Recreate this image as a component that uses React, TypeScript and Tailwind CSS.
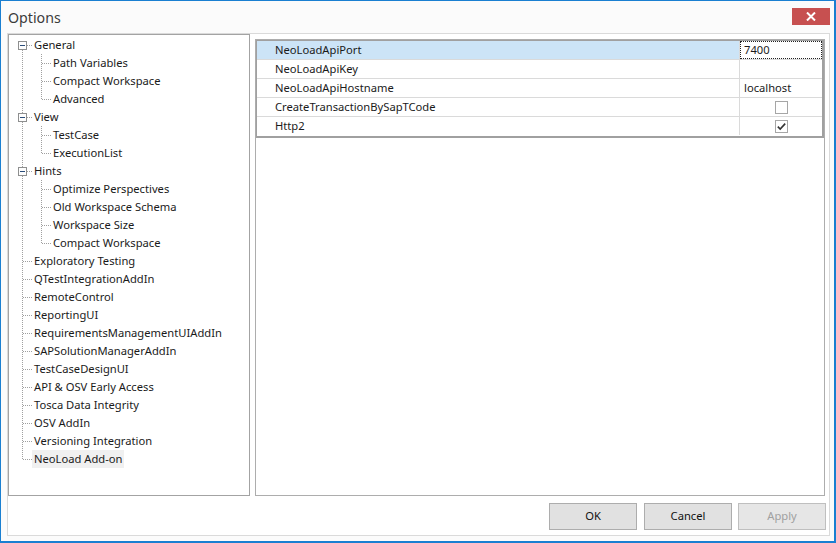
import React from "react";

type Row = {
  label: string;
  level: 0 | 1;
  parent?: boolean;
  first?: boolean;
  last?: boolean;
  lastChild?: boolean;
  selected?: boolean;
};

const tree: { label: string; children?: string[] }[] = [
  { label: "General", children: ["Path Variables", "Compact Workspace", "Advanced"] },
  { label: "View", children: ["TestCase", "ExecutionList"] },
  { label: "Hints", children: ["Optimize Perspectives", "Old Workspace Schema", "Workspace Size", "Compact Workspace"] },
  { label: "Exploratory Testing" },
  { label: "QTestIntegrationAddIn" },
  { label: "RemoteControl" },
  { label: "ReportingUI" },
  { label: "RequirementsManagementUIAddIn" },
  { label: "SAPSolutionManagerAddIn" },
  { label: "TestCaseDesignUI" },
  { label: "API & OSV Early Access" },
  { label: "Tosca Data Integrity" },
  { label: "OSV AddIn" },
  { label: "Versioning Integration" },
  { label: "NeoLoad Add-on" },
];

const rows: Row[] = [];
tree.forEach((n, i) => {
  rows.push({
    label: n.label,
    level: 0,
    parent: !!n.children,
    first: i === 0,
    last: i === tree.length - 1,
    selected: n.label === "NeoLoad Add-on",
  });
  (n.children || []).forEach((c, j, arr) => {
    rows.push({ label: c, level: 1, lastChild: j === arr.length - 1 });
  });
});

const DOT = "#a0a0a0";

function Gutter({ r }: { r: Row }) {
  if (r.level === 0) {
    return (
      <svg width="23" height="18" className="shrink-0" shapeRendering="crispEdges">
        <line
          x1="13.5"
          x2="13.5"
          y1={r.first ? 10 : 0}
          y2={r.last ? 10 : 18}
          stroke={DOT}
          strokeDasharray="1 1"
        />
        <line x1={r.parent ? 18 : 14} x2="23" y1="9.5" y2="9.5" stroke={DOT} strokeDasharray="1 1" />
        {r.parent && (
          <g>
            <rect x="9.5" y="5.5" width="8" height="8" fill="#fdfdfd" stroke="#8e8f8f" />
            <line x1="11" x2="16" y1="9.5" y2="9.5" stroke="#2a4d7a" />
          </g>
        )}
      </svg>
    );
  }
  return (
    <svg width="42" height="18" className="shrink-0" shapeRendering="crispEdges">
      <line x1="13.5" x2="13.5" y1="0" y2="18" stroke={DOT} strokeDasharray="1 1" />
      <line x1="32.5" x2="32.5" y1="0" y2={r.lastChild ? 10 : 18} stroke={DOT} strokeDasharray="1 1" />
      <line x1="33" x2="42" y1="9.5" y2="9.5" stroke={DOT} strokeDasharray="1 1" />
    </svg>
  );
}

function TreeView() {
  return (
    <div className="w-[242px] h-[462px] shrink-0 border border-[#a3a3a3] bg-white pt-[1px] overflow-hidden">
      {rows.map((r, i) => (
        <div key={i} className="flex h-[18px] items-start">
          <Gutter r={r} />
          <span
            className={
              "h-[18px] px-[2px] leading-[17px] whitespace-nowrap " +
              (r.selected ? "bg-[#f0f0f0]" : "")
            }
          >
            {r.label}
          </span>
        </div>
      ))}
    </div>
  );
}

function CheckBox({ checked }: { checked?: boolean }) {
  return (
    <div className="w-[13px] h-[13px] border border-[#a6a6a6] bg-white flex items-center justify-center">
      {checked && (
        <svg width="11" height="11" viewBox="0 0 11 11">
          <path d="M1.8 5.6 L4.2 8 L9.2 2.6" fill="none" stroke="#333333" strokeWidth="1.6" />
        </svg>
      )}
    </div>
  );
}

function PropertyGrid() {
  const props: { name: string; value: React.ReactNode; kind?: string }[] = [
    { name: "NeoLoadApiPort", value: "7400", kind: "focus" },
    { name: "NeoLoadApiKey", value: "" },
    { name: "NeoLoadApiHostname", value: "localhost" },
    { name: "CreateTransactionBySapTCode", value: <CheckBox />, kind: "check" },
    { name: "Http2", value: <CheckBox checked />, kind: "check" },
  ];
  return (
    <div className="w-[570px] h-[457px] mt-[5px] shrink-0 border border-[#adadad] bg-white">
      <div className="border border-[#a0a0a0] border-r-2 border-b-2">
        {props.map((p, i) => (
          <div
            key={p.name}
            className={
              "flex h-[19px] " + (i < props.length - 1 ? "border-b border-[#dadada]" : "h-[18px]")
            }
          >
            <div
              className={
                "flex-1 h-[18px] pl-[18px] leading-[18px] whitespace-nowrap " +
                (i === 0 ? "bg-[#cce4f7]" : "")
              }
            >
              {p.name}
            </div>
            <div className="w-[83px] h-[18px] border-l border-[#dadada] shrink-0">
              {p.kind === "focus" ? (
                <div className="h-[18px] border border-dotted border-[#222] pl-[3px] leading-[16px]">
                  {p.value}
                </div>
              ) : p.kind === "check" ? (
                <div className="h-[18px] flex items-center justify-center pl-[1px]">{p.value}</div>
              ) : (
                <div className="h-[18px] pl-[4px] leading-[18px]">{p.value}</div>
              )}
            </div>
          </div>
        ))}
      </div>
    </div>
  );
}

function Button({ label, disabled, className }: { label: string; disabled?: boolean; className?: string }) {
  return (
    <div
      className={
        "w-[88px] h-[27px] flex items-center justify-center border " +
        (disabled
          ? "border-[#bfbfbf] bg-[#e6e6e6] text-[#a0a0a0] "
          : "border-[#adadad] bg-[#e1e1e1] text-[#111] ") +
        (className || "")
      }
    >
      {label}
    </div>
  );
}

export default function App() {
  return (
    <div className="w-[836px] h-[543px] border border-r-2 border-b-2 border-[#1a7fd1] bg-[#fbfbfb] flex flex-col font-['Segoe_UI','Noto_Sans',sans-serif] text-[11.2px] text-[#1a1a1a] overflow-hidden">
      <div className="h-[32px] shrink-0 flex items-start justify-between">
        <div className="pt-[7px] pl-[7px] text-[14.2px] leading-[20px] text-[#3b3b3b]">Options</div>
        <div className="mt-[7px] mr-[4px] w-[38px] h-[17px] bg-[#c75050] flex items-center justify-center">
          <svg width="10" height="9" viewBox="0 0 10 9">
            <path d="M1 0.5 L9 8.5 M9 0.5 L1 8.5" stroke="#ffffff" strokeWidth="2" />
          </svg>
        </div>
      </div>
      <div className="ml-[6px] w-[823px] h-[503px] border border-[#dadada] bg-white flex flex-col">
        <div className="flex">
          <TreeView />
          <div className="w-[5px] shrink-0" />
          <PropertyGrid />
        </div>
        <div className="flex justify-end mt-[7px] pr-[3px]">
          <Button label="OK" />
          <Button label="Cancel" className="ml-[7px]" />
          <Button label="Apply" disabled className="ml-[6px]" />
        </div>
      </div>
    </div>
  );
}
